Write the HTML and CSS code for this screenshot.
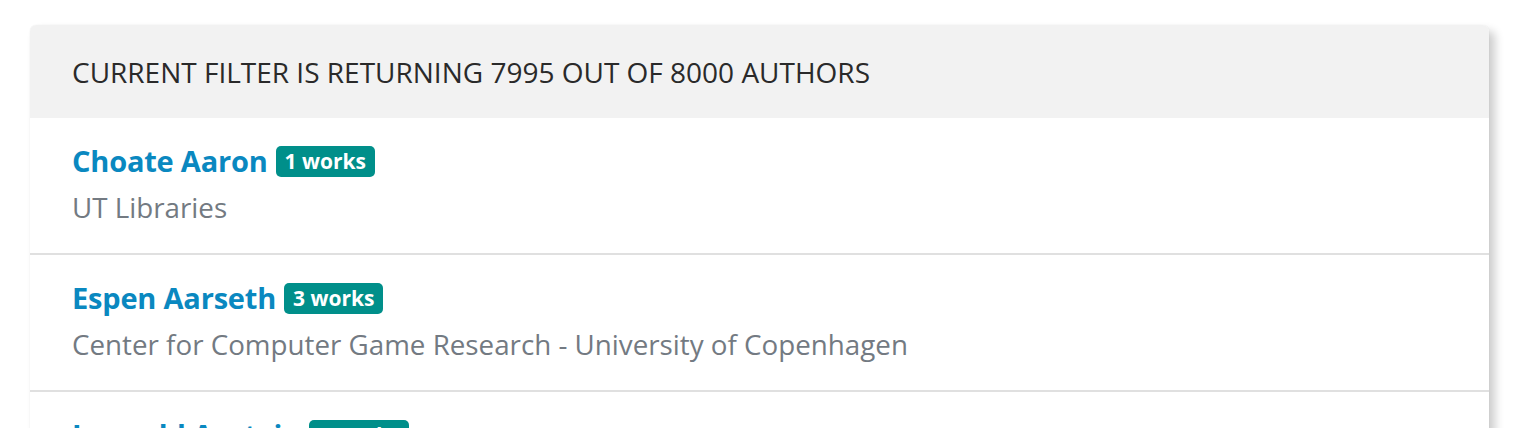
FILE: index.html
```html
<!DOCTYPE html>
<html>
<head>
<meta charset="utf-8">
<link rel="stylesheet" href="styles.css">
</head>
<body>
<div class="page">
  <div class="card">
    <div class="card-header">Current filter is returning 7995 out of 8000 authors</div>
    <ul class="list">
      <li class="item">
        <div class="name-line"><a class="name" href="#">Choate Aaron</a><span class="badge">1 works</span></div>
        <div class="affil">UT Libraries</div>
      </li>
      <li class="item">
        <div class="name-line"><a class="name" href="#">Espen Aarseth</a><span class="badge">3 works</span></div>
        <div class="affil">Center for Computer Game Research - University of Copenhagen</div>
      </li>
      <li class="item">
        <div class="name-line"><a class="name" href="#">Leopold Aastein</a><span class="badge">2 works</span></div>
        <div class="affil">University</div>
      </li>
    </ul>
  </div>
</div>
</body>
</html>
```
FILE: styles.css
```css
html, body {
  margin: 0;
  padding: 0;
  background: #ffffff;
}
body {
  font-family: "Open Sans", "Liberation Sans", sans-serif;
}
.page {
  padding: 25px 43px 0 30px;
}
.card {
  background: #ffffff;
  border-radius: 6px;
  box-shadow: 6px 6px 10px rgba(0, 0, 0, 0.2), 0 0 1px rgba(0, 0, 0, 0.12);
  overflow: hidden;
}
.card-header {
  background: #f2f2f2;
  height: 93px;
  box-sizing: border-box;
  padding: 0 42px;
  display: flex;
  align-items: center;
  text-transform: uppercase;
  font-size: 28px;
  font-weight: 400;
  color: #2a2a2a;
  border-radius: 6px 6px 0 0;
}
.list {
  list-style: none;
  margin: 0;
  padding: 0;
}
.item {
  padding: 23px 42px 0 42px;
  height: 137px;
  box-sizing: border-box;
  border-bottom: 2px solid #e0e0e0;
}
.name-line {
  display: flex;
  align-items: center;
  gap: 8px;
  height: 38px;
}
.name {
  font-size: 29px;
  font-weight: 700;
  color: #0a88c0;
  text-decoration: none;
  letter-spacing: -0.2px;
}
.badge {
  background: #008f8a;
  color: #ffffff;
  font-size: 21px;
  font-weight: 700;
  border-radius: 5px;
  padding: 0 9px;
  height: 31px;
  line-height: 31px;
  margin-top: 2px;
}
.affil {
  margin-top: 9px;
  font-size: 27.75px;
  font-weight: 400;
  color: #737a82;
}
```
